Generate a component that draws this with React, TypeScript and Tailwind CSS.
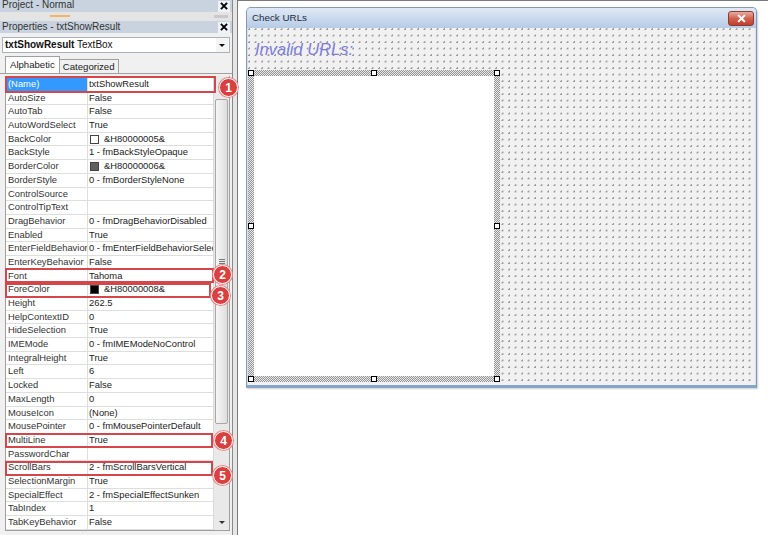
import React from "react";

type Row = { n: string; v: string; sw?: string; sel?: boolean };

const rows: Row[] = [
  { n: "(Name)", v: "txtShowResult", sel: true },
  { n: "AutoSize", v: "False" },
  { n: "AutoTab", v: "False" },
  { n: "AutoWordSelect", v: "True" },
  { n: "BackColor", v: "&H80000005&", sw: "bg-white" },
  { n: "BackStyle", v: "1 - fmBackStyleOpaque" },
  { n: "BorderColor", v: "&H80000006&", sw: "bg-[#5f5f5f]" },
  { n: "BorderStyle", v: "0 - fmBorderStyleNone" },
  { n: "ControlSource", v: "" },
  { n: "ControlTipText", v: "" },
  { n: "DragBehavior", v: "0 - fmDragBehaviorDisabled" },
  { n: "Enabled", v: "True" },
  { n: "EnterFieldBehavior", v: "0 - fmEnterFieldBehaviorSelectAll" },
  { n: "EnterKeyBehavior", v: "False" },
  { n: "Font", v: "Tahoma" },
  { n: "ForeColor", v: "&H80000008&", sw: "bg-black" },
  { n: "Height", v: "262.5" },
  { n: "HelpContextID", v: "0" },
  { n: "HideSelection", v: "True" },
  { n: "IMEMode", v: "0 - fmIMEModeNoControl" },
  { n: "IntegralHeight", v: "True" },
  { n: "Left", v: "6" },
  { n: "Locked", v: "False" },
  { n: "MaxLength", v: "0" },
  { n: "MouseIcon", v: "(None)" },
  { n: "MousePointer", v: "0 - fmMousePointerDefault" },
  { n: "MultiLine", v: "True" },
  { n: "PasswordChar", v: "" },
  { n: "ScrollBars", v: "2 - fmScrollBarsVertical" },
  { n: "SelectionMargin", v: "True" },
  { n: "SpecialEffect", v: "2 - fmSpecialEffectSunken" },
  { n: "TabIndex", v: "1" },
  { n: "TabKeyBehavior", v: "False" },
];

function XIcon({ className, w = 2.2 }: { className?: string; w?: number }) {
  return (
    <svg viewBox="0 0 10 10" className={className}>
      <path d="M2 2L8 8M8 2L2 8" stroke="currentColor" strokeWidth={w} strokeLinecap="square" fill="none" />
    </svg>
  );
}

function TitleBar({ text, up }: { text: string; up?: boolean }) {
  return (
    <div className="h-[12px] flex items-center justify-between bg-[#c9d3df] pl-[2px] pr-[2px] overflow-hidden">
      <span className={"text-[10px] leading-[12px] text-[#333] " + (up ? "-mt-[2px]" : "")}>{text}</span>
      <div className="w-[12px] h-[11px] bg-[#eef1f5] flex items-center justify-center">
        <XIcon className="w-[8px] h-[8px] text-black" w={2.4} />
      </div>
    </div>
  );
}

const rects = [
  "left-[5px] top-[76px] w-[211px] h-[17px]",
  "left-[5px] top-[268px] w-[209px] h-[15px]",
  "left-[5px] top-[283px] w-[206px] h-[15px]",
  "left-[5px] top-[433px] w-[208px] h-[15px]",
  "left-[5px] top-[461px] w-[208px] h-[15px]",
];

const badges: [string, string][] = [
  ["1", "left-[219px] top-[78px]"],
  ["2", "left-[213px] top-[265px]"],
  ["3", "left-[211px] top-[286px]"],
  ["4", "left-[214px] top-[431px]"],
  ["5", "left-[213px] top-[466px]"],
];

const handles = [
  "left-0 top-0",
  "left-[123px] top-0",
  "left-[246px] top-0",
  "left-0 top-[153px]",
  "left-[246px] top-[153px]",
  "left-0 top-[306px]",
  "left-[123px] top-[306px]",
  "left-[246px] top-[306px]",
];

export default function App() {
  return (
    <div className="relative w-[768px] h-[535px] overflow-hidden bg-[#f0f0f0] flex font-['Liberation_Sans',Arial,sans-serif] text-[#222]">
      {/* Left panel */}
      <div className="w-[233px] h-full flex flex-col border-r border-[#8a8a8a] bg-[#f0f0f0]">
        <TitleBar text="Project - Normal" up />
        <div className="h-[9px] bg-[#e4e4e4] flex items-start justify-between">
          <div className="ml-[50px] mt-[3px] w-[20px] h-[2px] bg-[#f2b466]" />
          <div className="mr-[4px] mt-[3px] w-[14px] h-[3px] bg-[#c9c9c9]" />
        </div>
        <TitleBar text="Properties - txtShowResult" />
        {/* combo */}
        <div className="mt-[4px] mx-[2px] h-[16px] bg-white border border-[#a9b0b8] flex items-center justify-between">
          <span className="pl-[2px] text-[10px] leading-[14px] text-[#111]">
            <b>txtShowResult</b> TextBox
          </span>
          <div className="w-[12px] h-[14px] mr-[1px] flex items-center justify-center bg-[#f4f4f4]">
            <svg viewBox="0 0 8 4" className="w-[6px] h-[3px]">
              <path d="M0 0H8L4 4Z" fill="#111" />
            </svg>
          </div>
        </div>
        {/* tabs */}
        <div className="mt-[3px] h-[18px] flex items-end pl-[5px] border-b border-[#a0a0a0]">
          <div className="h-[17px] px-[4px] bg-white border border-b-0 border-[#a0a0a0] text-[9.6px] leading-[15px] text-[#222]">
            Alphabetic
          </div>
          <div className="h-[14px] px-[3px] bg-[#f0f0f0] border border-b-0 border-l-0 border-[#a0a0a0] text-[9.6px] leading-[13px] text-[#222]">
            Categorized
          </div>
        </div>
        {/* grid */}
        <div className="mt-[2px] ml-[5px] w-[225px] h-[455px] flex border border-[#a0a0a0] border-t-0 bg-white pt-[2px]">
          <div className="w-[207px] flex flex-col">
            {rows.map((r) => (
              <div key={r.n} className="flex h-[13.69px] border-b border-[#dedede] shrink-0">
                <div
                  className={
                    "w-[82px] border-r border-[#dedede] pl-[2px] text-[9.4px] leading-[12.69px] whitespace-nowrap overflow-hidden " +
                    (r.sel ? "bg-[#3399ff] text-white" : "text-[#333]")
                  }
                >
                  {r.n}
                </div>
                <div className="w-[125px] pl-[1px] flex items-center text-[9.4px] leading-[12.69px] whitespace-nowrap overflow-hidden text-[#222]">
                  {r.sw && (
                    <span className={"inline-block w-[9px] h-[9px] border border-[#444] mr-[5px] ml-[1px] shrink-0 " + r.sw} />
                  )}
                  {r.v}
                </div>
              </div>
            ))}
          </div>
          {/* scrollbar */}
          <div className="w-[16px] flex flex-col bg-[#e9e9e9] border-l border-[#dadada] -mt-[2px]">
            <div className="h-[18px] flex items-center justify-center">
              <svg viewBox="0 0 8 4" className="w-[6px] h-[3px]">
                <path d="M0 4H8L4 0Z" fill="#333" />
              </svg>
            </div>
            <div className="flex-1 px-[1px]">
              <div className="mt-[5px] h-[325px] rounded-[2px] border border-[#a7a7a7] bg-gradient-to-r from-[#f6f6f6] to-[#dedede] flex flex-col items-center justify-center gap-[1px]">
                <div className="w-[6px] h-[1px] bg-[#777]" />
                <div className="w-[6px] h-[1px] bg-[#777]" />
                <div className="w-[6px] h-[1px] bg-[#777]" />
              </div>
            </div>
            <div className="h-[16px] flex items-center justify-center">
              <svg viewBox="0 0 8 4" className="w-[6px] h-[3px]">
                <path d="M0 0H8L4 4Z" fill="#333" />
              </svg>
            </div>
          </div>
        </div>
      </div>

      {/* splitter */}
      <div className="w-[4px] h-full bg-[#e6e6e6]" />

      {/* Right: designer */}
      <div className="flex-1 h-full bg-white border-l border-t border-[#7a7a7a] pl-[8px] pt-[6px]">
        <div className="w-[511px] h-[381px] flex flex-col rounded-t-[5px] border border-[#8799b2] border-b-[3px] border-b-[#86a6c8] bg-[#d6e2f1] shadow-[1px_1px_2px_rgba(0,0,0,0.2)]">
          <div className="h-[20px] shrink-0 flex items-center justify-between pl-[5px] pr-[2px] rounded-t-[4px] bg-gradient-to-b from-[#e0e9f5] to-[#b6cbe6]">
            <span className="text-[9.8px] text-[#1d2b3c]">Check URLs</span>
            <div className="w-[26px] h-[15px] rounded-[3px] border border-[#8c3b33] bg-gradient-to-b from-[#e9aaa1] via-[#d0624f] to-[#c13f2e] flex items-center justify-center">
              <XIcon className="w-[9px] h-[9px] text-white" w={2.2} />
            </div>
          </div>
          <div className="flex-1 mx-[1px] bg-[#f1f1f1] bg-[radial-gradient(circle_at_1px_1px,#8a8a8a_0.7px,transparent_0.75px)] bg-[length:6.5px_6.5px] flex flex-col">
            <div className="pt-[11px] pl-[7px] h-[31px] text-[16.5px] leading-[20px] italic text-[#7d7de0]">
              Invalid URLs:
            </div>
            <div className="mt-[11px] relative w-[252px] h-[312px] p-[6px] bg-[#b0b0b0] bg-[repeating-conic-gradient(#959595_0%_25%,#e8e8e8_0%_50%)] bg-[length:2px_2px]">
              <div className="w-full h-full bg-white" />
              {handles.map((h) => (
                <div key={h} className={"absolute w-[6px] h-[6px] bg-white border border-black " + h} />
              ))}
            </div>
          </div>
        </div>
      </div>

      {/* annotations */}
      {rects.map((r) => (
        <div key={r} className={"absolute border-2 border-[#d6454a] " + r} />
      ))}
      {badges.map(([n, p]) => (
        <div
          key={n}
          className={
            "absolute w-[19px] h-[19px] rounded-full bg-[#d9403f] border border-white shadow-[0_0_0_1px_#e98a8a] flex items-center justify-center text-white font-bold text-[12px] leading-none font-['Liberation_Sans',Arial,sans-serif] " +
            p
          }
        >
          {n}
        </div>
      ))}
    </div>
  );
}
